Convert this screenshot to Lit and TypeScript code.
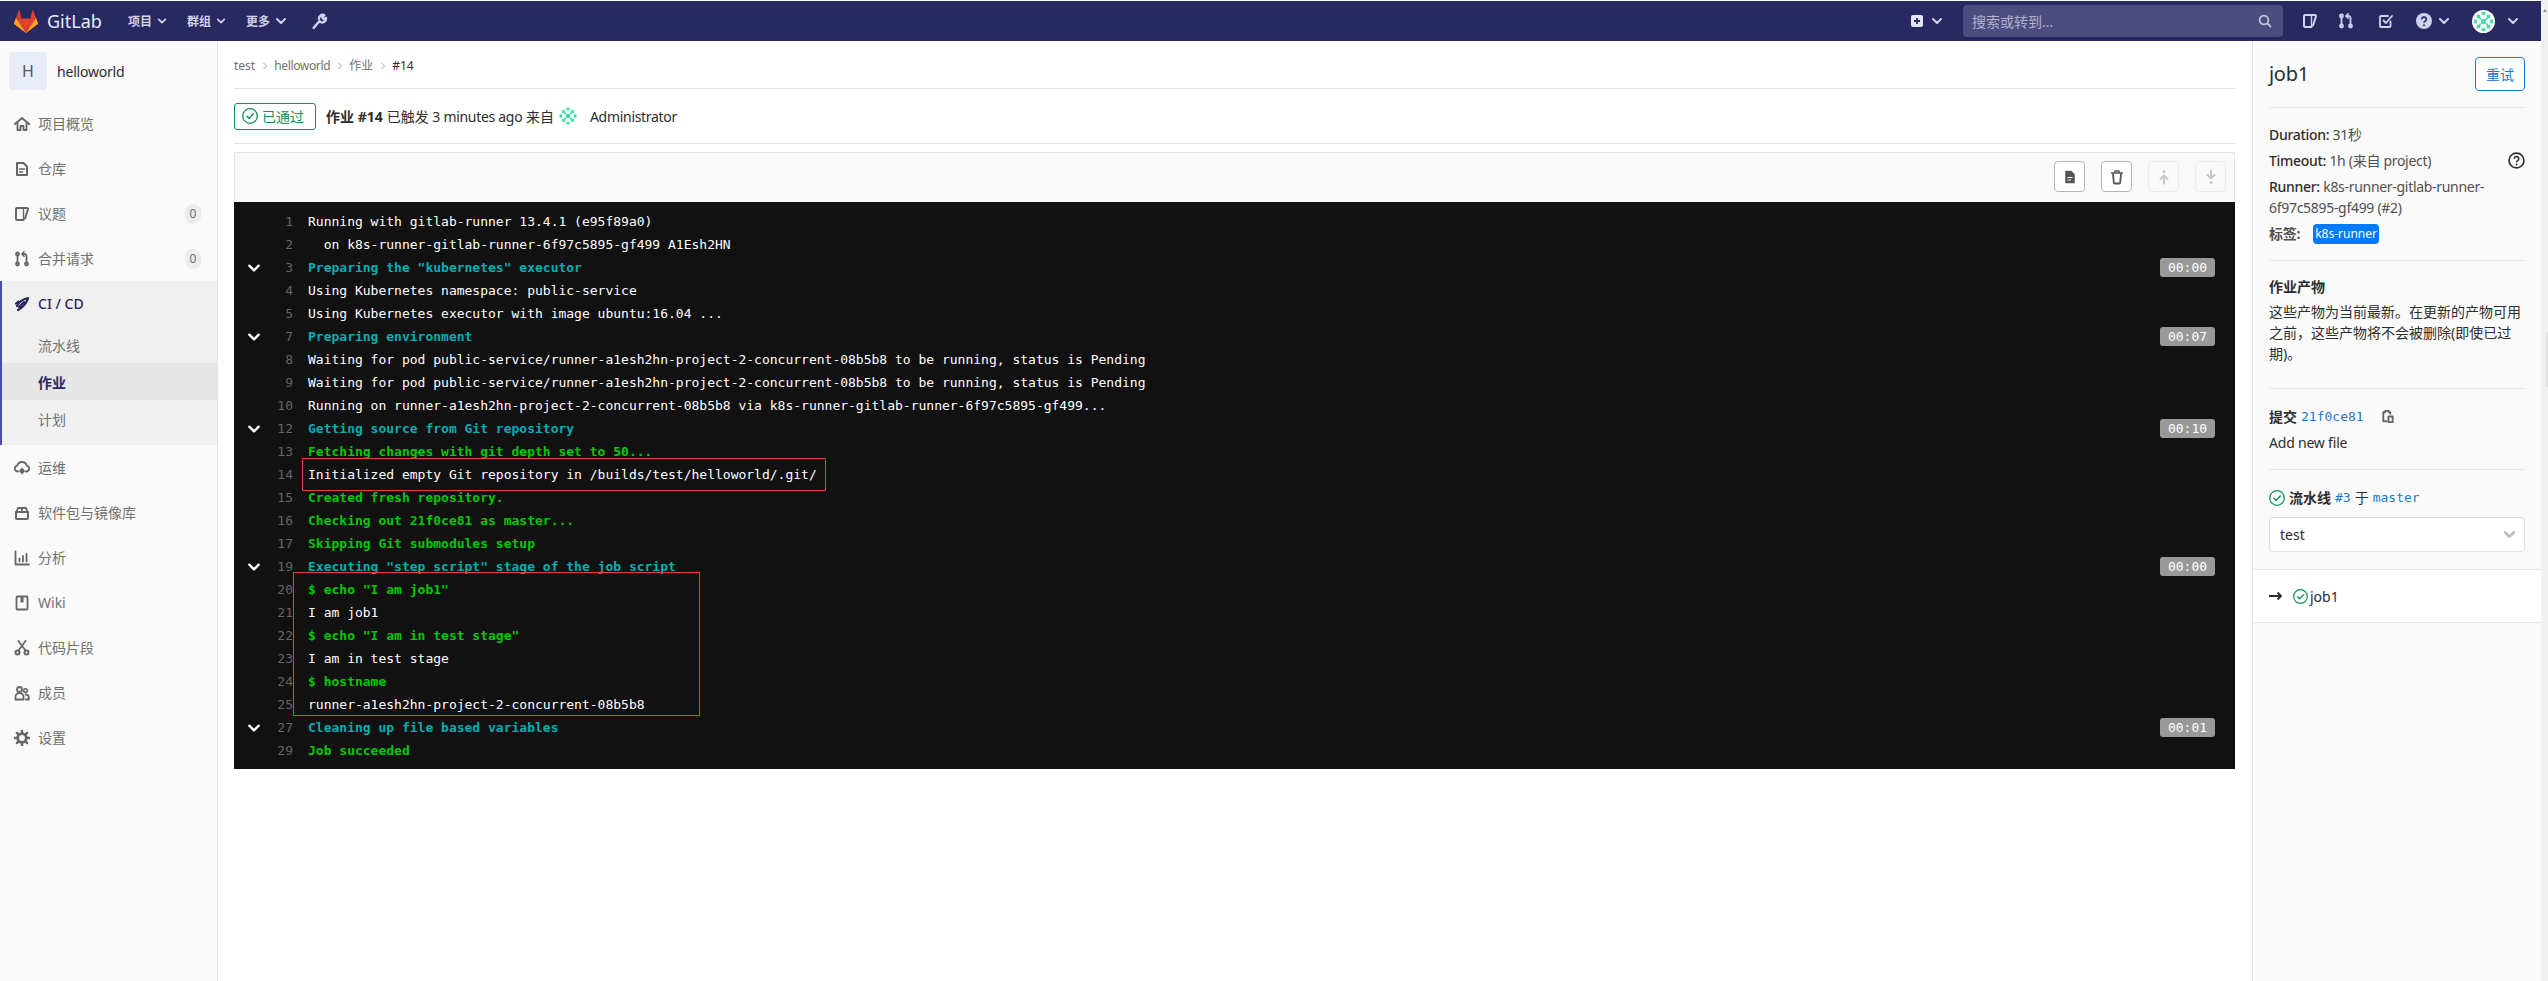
import { LitElement, html, css, svg, nothing } from "lit";
import { customElement } from "lit/decorators.js";

const ic = (body: unknown, size = 16) =>
  html`<svg class="ic" width=${size} height=${size} viewBox="0 0 16 16" fill="none" stroke="currentColor" stroke-width="2" stroke-linecap="round" stroke-linejoin="round">${body}</svg>`;

const chevron = (size = 12, w = 2) =>
  html`<svg class="ic" width=${size} height=${size} viewBox="0 0 12 12" fill="none" stroke="currentColor" stroke-width=${w} stroke-linecap="round" stroke-linejoin="round"><path d="M2 4l4 4 4-4"/></svg>`;

const icons = {
  home: svg`<path d="M1 8l7-6 7 6"/><path d="M3.5 7v7h3v-4h3v4h3V7" stroke-width="1.8"/>`,
  doc: svg`<path d="M3 2h6.5L13 5.5V14H3z"/><path d="M5.5 8h5M5.5 11h3" stroke-width="1.5"/>`,
  issue: svg`<path d="M9.5 2H3a1 1 0 0 0-1 1v10a1 1 0 0 0 1 1h6.5"/><path d="M9.5 2h3.5a1 1 0 0 1 1 1.3L11 12.5"/><path d="M9.5 3v10" stroke-width="1.4"/>`,
  mr: svg`<circle cx="3.5" cy="3" r="1.4"/><circle cx="3.5" cy="13" r="1.4"/><circle cx="12.5" cy="13" r="1.4"/><path d="M3.5 4.5v7M12.5 11.5V5a2 2 0 0 0-2-2H8.5" stroke-width="1.8"/><path d="M10 .8L8 3l2 2.2" stroke-width="1.6"/>`,
  rocket: svg`<path d="M14 2C9 3 5 6 3 10M14 2c-1 4-3 7-7 10M10 6l-5 5M2 7.5L4.5 5.5M4 14l3-2" stroke-width="2.2"/>`,
  cloud: svg`<path d="M4 11.5H3.5a3 3 0 0 1-.3-5.9A5 5 0 0 1 12.8 5.6a3 3 0 0 1-.3 5.9H12" stroke-width="1.8"/><circle cx="8" cy="11" r="2.4" fill="currentColor" stroke="none"/><path d="M8 8v6M5 11h6" stroke-width="1.2"/>`,
  pkg: svg`<path d="M2 7h12v6a1 1 0 0 1-1 1H3a1 1 0 0 1-1-1z"/><path d="M2.5 7L4 3h8l1.500 4M8 3v4" stroke-width="1.8"/>`,
  chart: svg`<path d="M1.500 1.500V14.500H15" stroke-width="1.800"/><path d="M5.500 8.500v3M9 6v5.500M12.500 4v7.500" stroke-width="1.800"/>`,
  book: svg`<rect x="2.500" y="1.500" width="11" height="13" rx="1" stroke-width="1.800"/><path d="M6.500 2v5.500h3V2" fill="currentColor" stroke="none"/>`,
  scissors: svg`<circle cx="3.500" cy="12.500" r="2"/><circle cx="12.500" cy="12.500" r="2"/><path d="M4.500 10.500L11.500 1M11.500 10.500L4.500 1" stroke-width="1.800"/>`,
  users: svg`<circle cx="5.500" cy="4.500" r="2.500" stroke-width="1.800"/><path d="M1.500 14.500v-2.500a4 4 0 0 1 8 0v2.500z" stroke-width="1.800"/><circle cx="11.500" cy="5.500" r="1.800" stroke-width="1.600"/><path d="M11.500 9.500a3 3 0 0 1 3.300 3v2h-3" stroke-width="1.800"/>`,
  gear: svg`<circle cx="8" cy="8" r="4.300" stroke-width="2.800"/><path d="M8 .8v2M8 13.200v2M.8 8h2M13.200 8h2M2.900 2.900l1.400 1.400M11.700 11.700l1.400 1.400M2.900 13.100l1.400-1.400M11.700 4.300l1.400-1.400" stroke-width="2.400"/>`,
};

const check = (size = 16) => html`<svg class="ic" width=${size} height=${size} viewBox="0 0 16 16" fill="none" stroke="#168f5a"><circle cx="8" cy="8" r="7.300" stroke-width="1.300"/><path d="M5 8.300l2.100 2.100L11.200 6" stroke-width="1.500" stroke-linecap="round" stroke-linejoin="round"/></svg>`;

const identicon = (size: number) => html`<svg class="ic" width=${size} height=${size} viewBox="0 0 24 24">
  <circle cx="12" cy="12" r="12" fill="#fbfbfb"/>
  <g fill="#3fdca4">
    <rect x="9.500" y="9.500" width="5" height="5"/><rect x="5" y="5" width="3.500" height="3.500"/><rect x="15.500" y="5" width="3.500" height="3.500"/>
    <rect x="5" y="15.500" width="3.500" height="3.500"/><rect x="15.500" y="15.500" width="3.500" height="3.500"/>
    <rect x="10" y="2" width="4" height="3"/><rect x="10" y="19" width="4" height="3"/><rect x="2" y="10" width="3" height="4"/><rect x="19" y="10" width="3" height="4"/>
    <rect x="7.500" y="8" width="2" height="2"/><rect x="14.500" y="8" width="2" height="2"/><rect x="7.500" y="14" width="2" height="2"/><rect x="14.500" y="14" width="2" height="2"/>
  </g></svg>`;

const nav: [keyof typeof icons, string, string?][] = [
  ["home", "项目概览"],
  ["doc", "仓库"],
  ["issue", "议题", "0"],
  ["mr", "合并请求", "0"],
];
const nav2: [keyof typeof icons, string][] = [
  ["cloud", "运维"],
  ["pkg", "软件包与镜像库"],
  ["chart", "分析"],
  ["book", "Wiki"],
  ["scissors", "代码片段"],
  ["users", "成员"],
  ["gear", "设置"],
];

type Row = { n: number; t: string; k: "w" | "c" | "g"; time?: string };
const rows: Row[] = [
  { n: 1, t: "Running with gitlab-runner 13.4.1 (e95f89a0)", k: "w" },
  { n: 2, t: "  on k8s-runner-gitlab-runner-6f97c5895-gf499 A1Esh2HN", k: "w" },
  { n: 3, t: 'Preparing the "kubernetes" executor', k: "c", time: "00:00" },
  { n: 4, t: "Using Kubernetes namespace: public-service", k: "w" },
  { n: 5, t: "Using Kubernetes executor with image ubuntu:16.04 ...", k: "w" },
  { n: 7, t: "Preparing environment", k: "c", time: "00:07" },
  { n: 8, t: "Waiting for pod public-service/runner-a1esh2hn-project-2-concurrent-08b5b8 to be running, status is Pending", k: "w" },
  { n: 9, t: "Waiting for pod public-service/runner-a1esh2hn-project-2-concurrent-08b5b8 to be running, status is Pending", k: "w" },
  { n: 10, t: "Running on runner-a1esh2hn-project-2-concurrent-08b5b8 via k8s-runner-gitlab-runner-6f97c5895-gf499...", k: "w" },
  { n: 12, t: "Getting source from Git repository", k: "c", time: "00:10" },
  { n: 13, t: "Fetching changes with git depth set to 50...", k: "g" },
  { n: 14, t: "Initialized empty Git repository in /builds/test/helloworld/.git/", k: "w" },
  { n: 15, t: "Created fresh repository.", k: "g" },
  { n: 16, t: "Checking out 21f0ce81 as master...", k: "g" },
  { n: 17, t: "Skipping Git submodules setup", k: "g" },
  { n: 19, t: 'Executing "step script" stage of the job script', k: "c", time: "00:00" },
  { n: 20, t: '$ echo "I am job1"', k: "g" },
  { n: 21, t: "I am job1", k: "w" },
  { n: 22, t: '$ echo "I am in test stage"', k: "g" },
  { n: 23, t: "I am in test stage", k: "w" },
  { n: 24, t: "$ hostname", k: "g" },
  { n: 25, t: "runner-a1esh2hn-project-2-concurrent-08b5b8", k: "w" },
  { n: 27, t: "Cleaning up file based variables", k: "c", time: "00:01" },
  { n: 29, t: "Job succeeded", k: "g" },
];

@customElement("app-root")
export class AppRoot extends LitElement {
  static styles = css`
    :host { display: block; width: 2548px; height: 981px; overflow: hidden; background: #fff;
      font-family: "Noto Sans", "Noto Sans CJK SC", sans-serif; font-size: 14px; color: #2e2e2e; }
    * { box-sizing: border-box; }
    .ic { display: block; flex: none; }
    .en { letter-spacing: -0.3px; }
    .page { display: flex; height: 100%; }
    .main { flex: 1; min-width: 0; display: flex; flex-direction: column; padding-top: 1px; }
    .scrollbar { width: 7px; background: #f1f1f1; display: flex; flex-direction: column; align-items: flex-end; }
    .arrow { width: 0; height: 0; margin: 9px 1px 0 0; border: 2px solid transparent; border-top: 0; border-bottom: 3px solid #8a8a8a; }
    .thumb { width: 2px; height: 55px; margin-top: 320px; background: #e2e2e2; }

    .top { height: 40px; background: #292961; color: #d1d1f0; display: flex; align-items: center; flex: none; }
    .logo { margin-left: 14px; }
    .brand { margin-left: 9px; font-size: 18px; color: #e8e8f6; width: 81px; }
    .menu { display: flex; align-items: center; gap: 5px; font-size: 12px; font-weight: 700; width: 59px; color: #d1d1f0; }
    .more { width: 65px; }
    .spacer { flex: 1; }
    .plus { color: #e4e4f2; margin-right: 8px; }
    .search { width: 320px; height: 32px; margin: 0 19px 0 20px; padding: 0 11px 0 9px; background: #4c4c7e; border-radius: 4px; display: flex; align-items: center; justify-content: space-between; color: #b2b2d0; font-size: 14px; }
    .tico { margin-right: 24px; }
    .tico.t1 { margin-right: 20px; }
    .tico.t3 { margin-right: 22px; }
    .help { display: flex; align-items: center; gap: 6px; margin-right: 22px; }
    .user { display: flex; align-items: center; gap: 12px; margin-right: 22px; }

    .body { flex: 1; display: flex; min-height: 0; }
    .side { width: 218px; flex: none; background: #fafafa; border-right: 1px solid #e5e5e5; }
    .proj { height: 60px; padding: 11px 9px 0; display: flex; align-items: flex-start; gap: 10px; color: #2e2e2e; }
    .pav { width: 38px; height: 38px; border-radius: 4px; background: #e8ebf8; color: #555; font-size: 16px; display: flex; align-items: center; justify-content: center; }
    .pname { line-height: 40px; letter-spacing: -0.2px; }
    .item { height: 45px; display: flex; align-items: center; padding: 0 16px 0 14px; gap: 8px; color: #707070; }
    .item .ic { color: #666; }
    .item .lbl { flex: 1; margin-top: -1px; }
    .cnt { width: 16px; height: 20px; border-radius: 8px; background: #ececec; color: #707070; font-size: 12px; display: flex; align-items: center; justify-content: center; }
    .ci { background: #f0f0f0; border-left: 2px solid #4b4ba3; padding-bottom: 8px; }
    .ci .item { padding-left: 12px; color: #292961; font-weight: 500; }
    .ci .item .ic { color: #292961; }
    .sub { height: 37px; padding-left: 36px; display: flex; align-items: center; color: #707070; }
    .sub.on { background: #e6e6e6; color: #292961; font-weight: 700; }

    .content { flex: 1; min-width: 0; padding: 0 17px 0 16px; }
    .crumbs { height: 48px; padding-top: 16px; border-bottom: 1px solid #e5e5e5; display: flex; align-items: flex-start; font-size: 12px; line-height: 18px; color: #707070; }
    .crumbs .hw { letter-spacing: -0.35px; }
    .sep { width: 19px; display: flex; justify-content: center; padding-top: 5px; color: #a7a7a7; }
    .cur { color: #2e2e2e; }
    .jobhead { height: 55px; border-bottom: 1px solid #e5e5e5; display: flex; align-items: center; color: #2e2e2e; }
    .status { width: 82px; height: 27px; border: 1px solid #168f5a; border-radius: 3px; color: #168f5a; display: flex; align-items: center; gap: 4px; padding-left: 7px; margin-right: 10px; }
    .jobhead b { font-weight: 700; margin-right: 4px; }
    .jobhead .av { margin: 0 12px 0 4px; }
    .tools { height: 50px; margin-top: 8px; border: 1px solid #e5e5e5; border-bottom: 0; background: #fafafa; display: flex; justify-content: flex-end; align-items: flex-start; gap: 16px; padding: 8px 8px 0 0; }
    .tbtn { width: 31px; height: 31px; background: #fff; border: 1px solid #b5b5b5; border-radius: 4px; color: #555; display: flex; align-items: center; justify-content: center; }
    .tbtn.off { background: #fafafa; border-color: #ececec; color: #c8c8c8; }

    .log { position: relative; background: #111; height: 567px; padding-top: 8px; font-family: "DejaVu Sans Mono", "Liberation Mono", monospace; font-size: 13px; color: #fff; }
    .row { height: 23px; display: flex; align-items: center; padding-right: 20px; }
    .chev { width: 40px; padding-left: 13px; flex: none; color: #fff; }
    .num { width: 19px; flex: none; text-align: right; color: #666; margin-right: 15px; white-space: nowrap; direction: rtl; }
    .txt { flex: 1; white-space: pre; }
    .txt.c { color: #00aeb4; font-weight: 700; }
    .txt.g { color: #00c800; font-weight: 700; }
    .time { width: 55px; height: 19px; border-radius: 3px; background: #999; color: #fff; display: flex; align-items: center; justify-content: center; }
    .mark { position: absolute; border: 1px solid #ee3b3b; pointer-events: none; }
    .m1 { left: 68px; top: 256px; width: 524px; height: 33px; }
    .m2 { left: 59px; top: 370px; width: 407px; height: 144px; }

    .aside { width: 289px; flex: none; background: #fafafa; border-left: 1px solid #e5e5e5; font-size: 14px; line-height: 21px; }
    .sec { margin: 0 16px; border-bottom: 1px solid #e5e5e5; }
    .shead { height: 67px; padding-top: 16px; display: flex; justify-content: space-between; align-items: flex-start; }
    .title { font-size: 20px; line-height: 34px; color: #2e2e2e; letter-spacing: -0.3px; }
    .retry { width: 50px; height: 34px; background: #fff; border: 1px solid #1f78d1; border-radius: 4px; color: #1f78d1; display: flex; align-items: center; justify-content: center; }
    .sinfo { height: 153px; padding-top: 16px; color: #505050; letter-spacing: -0.3px; }
    .line { margin-bottom: 5px; }
    .line b { font-weight: 500; color: #2e2e2e; }
    .between { display: flex; justify-content: space-between; align-items: center; }
    .tagrow { display: flex; align-items: center; gap: 13px; }
    .chip { width: 66px; height: 20px; border-radius: 4px; background: #007bff; color: #fff; font-size: 12px; letter-spacing: 0; display: flex; align-items: center; justify-content: center; }
    .sart { height: 128px; padding-top: 15px; color: #2e2e2e; }
    .sart h4, .scommit b, .spipe b { margin: 0; font-size: 14px; font-weight: 700; }
    .sart p { margin: 4px 0 0; }
    .scommit { height: 81px; padding-top: 17px; }
    .crow { display: flex; align-items: center; gap: 4px; }
    .mono { font-family: "DejaVu Sans Mono", "Liberation Mono", monospace; font-size: 13px; color: #1f78d1; }
    .copy { color: #666; margin-left: 12px; }
    .addfile { margin-top: 5px; letter-spacing: -0.2px; }
    .spipe { margin: 0 16px; height: 99px; padding-top: 17px; }
    .prow { display: flex; align-items: center; gap: 4px; }
    .select { height: 35px; margin-top: 9px; border: 1px solid #dfdfdf; border-radius: 4px; background: #fff; padding: 0 8px 0 10px; display: flex; align-items: center; justify-content: space-between; }
    .select .ic { color: #bbb; }
    .jobs { height: 54px; background: #fff; border-top: 1px solid #e5e5e5; border-bottom: 1px solid #e5e5e5; display: flex; align-items: center; padding-left: 16px; }
    .jobs .to { width: 24px; flex: none; color: #2e2e2e; }
    .jobs .ic + span { margin-left: 2px; }
  `;

  render() {
    return html`<div class="page">
      <div class="main">
        ${this.topbar()}
        <div class="body">
          ${this.sidebar()}
          ${this.center()}
          ${this.aside()}
        </div>
      </div>
      <div class="scrollbar"><div class="arrow"></div><div class="thumb"></div></div>
    </div>`;
  }

  topbar() {
    return html`<div class="top">
      <svg class="logo ic" width="24" height="23" viewBox="0 0 24 23">
        <path d="M12 23L.3 14.300a1 1 0 0 1-.3-1L2.100 7z" fill="#fc6d26"/><path d="M12 23l11.700-8.700a1 1 0 0 0 .3-1L21.900 7z" fill="#fc6d26"/>
        <path d="M12 23L7.600 8.600H2.100z" fill="#e24329"/><path d="M12 23l4.400-14.400h5.500z" fill="#e24329"/>
        <path d="M12 23L7.600 8.600h8.800z" fill="#e2432a"/><path d="M2.100 8.600L4.700.5a.4.4 0 0 1 .8 0l2.100 8.100z" fill="#e24329"/><path d="M21.900 8.600L19.300.5a.4.4 0 0 0-.8 0l-2.100 8.100z" fill="#e24329"/>
        <path d="M0 13.500l12 9.500L2.100 8.600z" fill="#fca326"/><path d="M24 13.500L12 23l9.900-14.400z" fill="#fca326"/>
      </svg>
      <span class="brand">GitLab</span>
      <span class="menu">项目 ${chevron(10)}</span>
      <span class="menu">群组 ${chevron(10)}</span>
      <span class="menu more">更多 ${chevron(12)}</span>
      ${ic(svg`<path d="M2.500 14l5.500-6.500M7.500 5.500a3.500 3.500 0 0 1 5-3.500l-2 2 1.500 2 2-1.500a3.500 3.500 0 0 1-5 4" stroke-width="2.200"/>`, 17)}
      <span class="spacer"></span>
      <svg class="plus ic" width="12" height="12" viewBox="0 0 12 12"><rect width="12" height="12" rx="2" fill="currentColor"/><path d="M6 3v6M3 6h6" stroke="#292961" stroke-width="1.800"/></svg>
      ${chevron(12)}
      <div class="search"><span>搜索或转到...</span>
        <svg class="ic" width="14" height="14" viewBox="0 0 14 14" fill="none" stroke="#c4c4da" stroke-width="1.800"><circle cx="6" cy="6" r="4.400"/><path d="M9.500 9.500L13 13"/></svg>
      </div>
      <span class="tico t1">${ic(icons.issue)}</span>
      <span class="tico">${ic(icons.mr)}</span>
      <span class="tico t3">${ic(svg`<path d="M12.500 8.500v4.500a1 1 0 0 1-1 1H3a1 1 0 0 1-1-1V4a1 1 0 0 1 1-1h7" stroke-width="1.800"/><path d="M5.500 7.500L8 10l6-7" stroke-width="1.800"/>`)}</span>
      <span class="help">
        <svg class="ic" width="16" height="16" viewBox="0 0 16 16"><circle cx="8" cy="8" r="8" fill="#d1d1f0"/><path d="M5.700 6.200a2.300 2.300 0 1 1 3.400 2.100c-.8.400-1.100.8-1.100 1.500" fill="none" stroke="#292961" stroke-width="1.700"/><circle cx="8" cy="12.300" r="1" fill="#292961"/></svg>
        ${chevron(12)}
      </span>
      <span class="user">${identicon(23)} ${chevron(12)}</span>
    </div>`;
  }

  sidebar() {
    const item = (i: [keyof typeof icons, string, string?]) => html`<div class="item">
      ${ic(icons[i[0]])}<span class="lbl">${i[1]}</span>${i[2] ? html`<span class="cnt">${i[2]}</span>` : nothing}
    </div>`;
    return html`<nav class="side">
      <div class="proj"><div class="pav">H</div><span class="pname">helloworld</span></div>
      ${nav.map(item)}
      <div class="ci">
        <div class="item">${ic(icons.rocket)}<span class="lbl">CI / CD</span></div>
        <div class="sub">流水线</div>
        <div class="sub on">作业</div>
        <div class="sub">计划</div>
      </div>
      ${nav2.map(item)}
    </nav>`;
  }

  center() {
    const sep = html`<span class="sep"><svg class="ic" width="8" height="8" viewBox="0 0 8 8" fill="none" stroke="currentColor" stroke-width="1"><path d="M2.500 1L5.500 4l-3 3"/></svg></span>`;
    return html`<main class="content">
      <div class="crumbs"><span>test</span>${sep}<span class="hw">helloworld</span>${sep}<span>作业</span>${sep}<span class="cur">#14</span></div>
      <div class="jobhead">
        <span class="status">${check(16)}已通过</span>
        <b>作业 #14</b><span>已触发 <span class="en">3 minutes ago</span> 来自</span>
        <span class="av">${identicon(20)}</span><span class="en">Administrator</span>
      </div>
      <div class="tools">
        <span class="tbtn">${ic(svg`<path d="M4 2.500h5l3 3V13.500H4z" fill="currentColor" stroke-width="1.500"/><path d="M6 8.500h4M6 11h2.500" stroke="#fff" stroke-width="1.200"/>`)}</span>
        <span class="tbtn">${ic(svg`<path d="M2.500 4h11M6 3.500V2h4v1.500" stroke-width="1.500"/><path d="M4 5l.8 8.500a1 1 0 0 0 1 1h4.400a1 1 0 0 0 1-1L12 5" stroke-width="1.800"/>`)}</span>
        <span class="tbtn off">${ic(svg`<circle cx="8" cy="2.500" r="1.500" fill="currentColor" stroke="none"/><path d="M8 14.500V6.500M4.500 10L8 6.500l3.500 3.500" stroke-width="2"/>`)}</span>
        <span class="tbtn off">${ic(svg`<circle cx="8" cy="13.500" r="1.500" fill="currentColor" stroke="none"/><path d="M8 1.500v8M4.500 6L8 9.500 11.500 6" stroke-width="2"/>`)}</span>
      </div>
      <div class="log">
        ${rows.map((r) => html`<div class="row">
          <span class="chev">${r.time ? chevron(14, 2) : nothing}</span>
          <span class="num">${r.n}</span>
          <span class="txt ${r.k}">${r.t}</span>
          ${r.time ? html`<span class="time">${r.time}</span>` : nothing}
        </div>`)}
        <div class="mark m1"></div>
        <div class="mark m2"></div>
      </div>
    </main>`;
  }

  aside() {
    return html`<aside class="aside">
      <div class="sec shead"><span class="title">job1</span><span class="retry">重试</span></div>
      <div class="sec sinfo">
        <div class="line"><b>Duration:</b> 31秒</div>
        <div class="line between"><span><b>Timeout:</b> 1h (来自 project)</span>
          <svg class="ic" width="17" height="17" viewBox="0 0 16 16" fill="none" stroke="#2e2e2e"><circle cx="8" cy="8" r="7" stroke-width="1.600"/><path d="M5.900 6.300a2.100 2.100 0 1 1 3.200 1.800c-.8.400-1.100.8-1.100 1.500" stroke-width="1.500"/><circle cx="8" cy="11.700" r=".9" fill="#2e2e2e" stroke="none"/></svg>
        </div>
        <div class="line"><b>Runner:</b> k8s-runner-gitlab-runner-<br />6f97c5895-gf499 (#2)</div>
        <div class="tagrow"><b>标签:</b><span class="chip">k8s-runner</span></div>
      </div>
      <div class="sec sart">
        <h4>作业产物</h4>
        <p>这些产物为当前最新。在更新的产物可用<br />之前，这些产物将不会被删除(即使已过<br />期)。</p>
      </div>
      <div class="sec scommit">
        <div class="crow"><b>提交</b><span class="mono">21f0ce81</span>
          <span class="copy">${ic(svg`<path d="M11 5V3.500h-1.500V2h-4v1.500H3.500V13H7" stroke-width="2"/><rect x="9" y="8" width="4.500" height="6" stroke-width="2"/>`, 15)}</span>
        </div>
        <div class="addfile">Add new file</div>
      </div>
      <div class="spipe">
        <div class="prow">${check(16)}<b>流水线</b><span class="mono">#3</span><span>于</span><span class="mono">master</span></div>
        <div class="select"><span>test</span>${chevron(13, 2.500)}</div>
      </div>
      <div class="jobs">
        <span class="to"><svg class="ic" width="13" height="10" viewBox="0 0 13 10" fill="none" stroke="#2e2e2e" stroke-width="1.800" stroke-linejoin="round"><path d="M0 5h11.500M8.500 1.500L12 5 8.500 8.500"/></svg></span>
        ${check(15)}<span>job1</span>
      </div>
    </aside>`;
  }
}
